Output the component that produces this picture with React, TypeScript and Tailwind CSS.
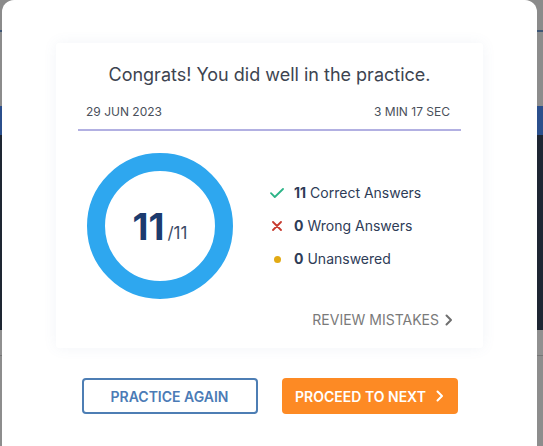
import React from 'react';

const stats = [
  { key: 'correct', count: 11, label: 'Correct Answers' },
  { key: 'wrong', count: 0, label: 'Wrong Answers' },
  { key: 'unanswered', count: 0, label: 'Unanswered' },
];

const StatIcon: React.FC<{ kind: string }> = ({ kind }) => {
  if (kind === 'correct') {
    return (
      <svg width="14" height="10" viewBox="0 0 14 10" fill="none">
        <path d="M1 5.2L4.8 9L13 1" stroke="#2bb487" strokeWidth="1.8" strokeLinecap="round" strokeLinejoin="round" />
      </svg>
    );
  }
  if (kind === 'wrong') {
    return (
      <svg width="10" height="10" viewBox="0 0 10 10" fill="none">
        <path d="M1 1L9 9M9 1L1 9" stroke="#c73a2e" strokeWidth="1.8" strokeLinecap="round" />
      </svg>
    );
  }
  return <span className="block w-[7px] h-[7px] rounded-full bg-[#e2aa14]" />;
};

const Chevron: React.FC<{ color: string }> = ({ color }) => (
  <svg width="8" height="12" viewBox="0 0 8 12" fill="none">
    <path d="M1.5 1.5L6 6L1.5 10.5" stroke={color} strokeWidth="2" strokeLinecap="round" strokeLinejoin="round" />
  </svg>
);

const App: React.FC = () => {
  return (
    <div
      className="relative w-[543px] h-[446px] overflow-hidden bg-[#8a8a8a]"
      style={{ fontFamily: 'Inter, "Noto Sans", sans-serif' }}
    >
      {/* page behind the overlay */}
      <div className="flex flex-col h-full">
        <div className="h-[30px] bg-[#8b8b8b]" />
        <div className="h-[2px] bg-[#3e5675]" />
        <div className="h-[74px] bg-[#8c8c8c]" />
        <div className="h-[29px] bg-[#2b4f8c]" />
        <div className="h-[195px] bg-[#1e2633]" />
        <div className="h-[25px] bg-[#909090]" />
        <div className="h-px bg-[#767676]" />
        <div className="flex-1 bg-[#8d8d8d]" />
      </div>

      {/* modal */}
      <div className="absolute left-[2px] top-0 w-[535px] h-[480px] rounded-t-[12px] bg-white flex flex-col items-center pt-[43px]">
        <div className="w-[427px] bg-white rounded-[3px] shadow-[0_0_14px_rgba(90,110,160,0.08)] px-[22px] pt-[20px] pb-[18px]">
          <h2 className="text-center text-[18px] leading-[24px] text-[#3d4450]">
            Congrats! You did well in the practice.
          </h2>

          <div className="mt-[17px] flex justify-between items-center pl-2 pr-[11px] pb-[9px] border-b-2 border-[#b2b0e2] text-[12px] leading-[16px] text-[#4a505b]">
            <span>29 JUN 2023</span>
            <span>3 MIN 17 SEC</span>
          </div>

          <div className="mt-[22px] flex items-center pl-[9px]">
            <div className="w-[146px] h-[146px] rounded-full border-[18px] border-[#2ea7ef] flex items-center justify-center">
              <span className="text-[37px] leading-none font-bold text-[#1c3b6e]">11</span>
              <span className="text-[17px] leading-none text-[#3c4b66] mt-[14px] ml-[3px]">/11</span>
            </div>

            <ul className="ml-[37px] flex flex-col gap-[13px]">
              {stats.map((s) => (
                <li key={s.key} className="flex items-center text-[14px] leading-[20px] text-[#2e3c57]">
                  <span className="w-[14px] flex items-center justify-center">
                    <StatIcon kind={s.key} />
                  </span>
                  <span className="ml-[10px] font-bold">{s.count}</span>
                  <span className="ml-[4px]">{s.label}</span>
                </li>
              ))}
            </ul>
          </div>

          <div className="mt-[11px] flex justify-end items-center gap-[6px] pr-[8px] text-[14px] leading-[20px] text-[#7a7a7a]">
            <span>REVIEW MISTAKES</span>
            <Chevron color="#6f6f6f" />
          </div>
        </div>

        <div className="mt-[30px] flex gap-[24px]">
          <button className="w-[176px] h-[36px] rounded-[4px] border-2 border-[#4d7eb4] text-[#4b7bb6] text-[14px] font-semibold">
            PRACTICE AGAIN
          </button>
          <button className="w-[176px] h-[36px] rounded-[4px] bg-[#fd8a24] text-white text-[14px] font-semibold flex items-center justify-center gap-[10px]">
            <span>PROCEED TO NEXT</span>
            <Chevron color="#ffffff" />
          </button>
        </div>
      </div>
    </div>
  );
};

export default App;
